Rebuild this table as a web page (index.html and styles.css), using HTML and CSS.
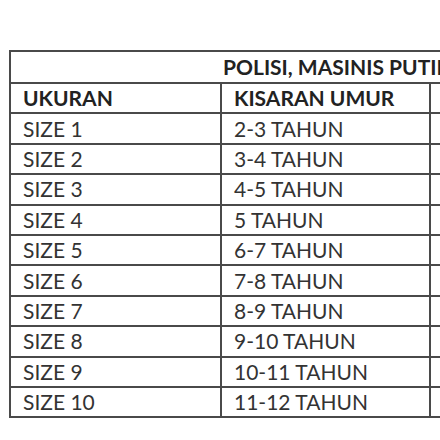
FILE: index.html
```html
<!DOCTYPE html>
<html>
<head>
<meta charset="utf-8">
<link rel="stylesheet" href="styles.css">
</head>
<body>
<div class="page">
<table class="size-table">
  <colgroup>
    <col class="col-a"><col class="col-b"><col class="col-c">
  </colgroup>
  <tr class="title-row"><td></td><td colspan="2" class="title">POLISI, MASINIS PUTIH</td></tr>
  <tr class="head-row"><td class="head">UKURAN</td><td class="head">KISARAN UMUR</td><td></td></tr>
  <tr><td>SIZE 1</td><td>2-3 TAHUN</td><td></td></tr>
  <tr><td>SIZE 2</td><td>3-4 TAHUN</td><td></td></tr>
  <tr><td>SIZE 3</td><td>4-5 TAHUN</td><td></td></tr>
  <tr><td>SIZE 4</td><td>5 TAHUN</td><td></td></tr>
  <tr><td>SIZE 5</td><td>6-7 TAHUN</td><td></td></tr>
  <tr><td>SIZE 6</td><td>7-8 TAHUN</td><td></td></tr>
  <tr><td>SIZE 7</td><td>8-9 TAHUN</td><td></td></tr>
  <tr><td>SIZE 8</td><td>9-10 TAHUN</td><td></td></tr>
  <tr><td>SIZE 9</td><td>10-11 TAHUN</td><td></td></tr>
  <tr><td>SIZE 10</td><td>11-12 TAHUN</td><td></td></tr>
</table>
</div>
</body>
</html>
```
FILE: styles.css
```css
html, body {
  margin: 0;
  padding: 0;
  background: #ffffff;
  overflow: hidden;
}
.page {
  width: 440px;
  height: 440px;
  overflow: hidden;
  padding: 50px 0 0 9px;
  box-sizing: border-box;
}
.size-table {
  border-collapse: collapse;
  table-layout: fixed;
  width: 720px;
  font-family: Lato, "Open Sans", "Liberation Sans", sans-serif;
  font-size: 21px;
  color: #333333;
}
.col-a { width: 211px; }
.col-b { width: 209px; }
.col-c { width: 300px; }
.size-table td {
  border: 2px solid #4a4a4a;
  height: 30.4px;
  padding: 0 0 0 12px;
  box-sizing: border-box;
  white-space: nowrap;
  overflow: hidden;
  vertical-align: middle;
  line-height: 26px;
}
.title-row td {
  height: 32px;
}
.title-row td:first-child {
  border-right: none;
}
.title-row td.title {
  border-left: none;
  padding-left: 2px;
}
.title, .head {
  font-weight: 700;
  color: #222222;
}
```
